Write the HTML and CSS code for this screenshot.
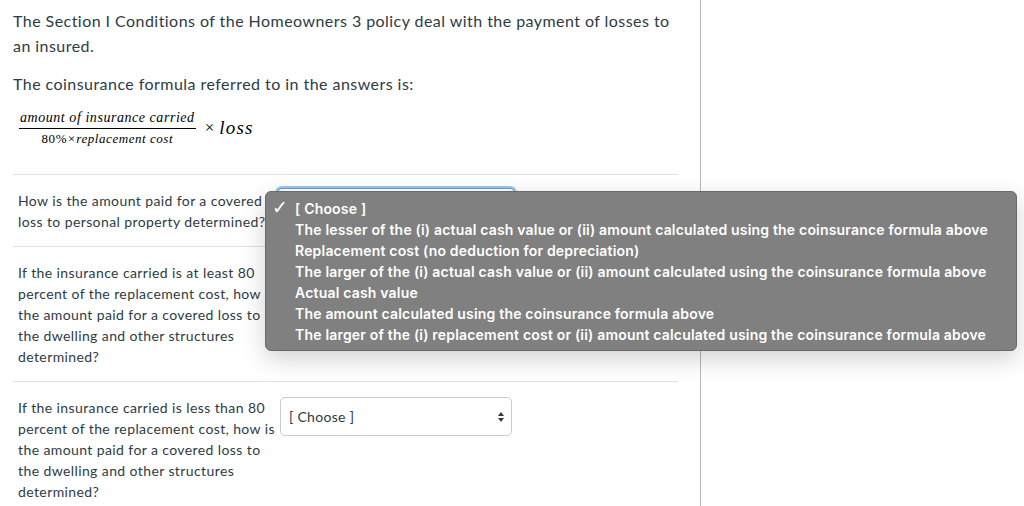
FILE: index.html
```html
<!DOCTYPE html>
<html lang="en">
<head>
  <meta charset="UTF-8" />
  <title>Quiz Question</title>
  <link rel="stylesheet" href="styles.css">
</head>
<body>
  <div class="page">
    <div class="main">
      <div class="content">
        <div class="intro">
          <p>The Section I Conditions of the Homeowners 3 policy deal with the payment of losses to an insured.</p>
          <p class="lead">The coinsurance formula referred to in the answers is:</p>
          <div class="formula">
            <span class="frac">
              <span class="num">amount of insurance carried</span>
              <span class="den"><span class="up">80%</span>×replacement cost</span>
            </span>
            <span class="times">×</span>
            <span class="loss">loss</span>
          </div>
        </div>

        <div class="question">
          <div class="q-text">How is the amount paid for a covered loss to personal property determined?</div>
          <div class="select focused">[ Choose ]<span class="arrows"></span></div>
        </div>

        <div class="question">
          <div class="q-text">If the insurance carried is at least 80 percent of the replacement cost, how is the amount paid for a covered loss to the dwelling and other structures determined?</div>
          <div class="select">[ Choose ]<span class="arrows"></span></div>
        </div>

        <div class="question">
          <div class="q-text">If the insurance carried is less than 80 percent of the replacement cost, how is the amount paid for a covered loss to the dwelling and other structures determined?</div>
          <div class="select">[ Choose ]<span class="arrows"></span></div>
        </div>
      </div>
    </div>
    <div class="side"></div>
  </div>

  <ul class="dropdown">
    <li class="checked">[ Choose ]</li>
    <li>The lesser of the (i) actual cash value or (ii) amount calculated using the coinsurance formula above</li>
    <li>Replacement cost (no deduction for depreciation)</li>
    <li>The larger of the (i) actual cash value or (ii) amount calculated using the coinsurance formula above</li>
    <li>Actual cash value</li>
    <li>The amount calculated using the coinsurance formula above</li>
    <li>The larger of the (i) replacement cost or (ii) amount calculated using the coinsurance formula above</li>
  </ul>
</body>
</html>
```

FILE: styles.css
```css
body {
  margin: 0;
  padding: 0;
  background: #fff;
  color: #2d3b45;
  font-family: Lato, "Liberation Sans", sans-serif;
  overflow: hidden;
}

.page {
  display: flex;
  height: 506px;
}

.main {
  width: 700px;
  border-right: 1px solid #b4b8bb;
}

.content {
  padding: 8px 22px 0 13px;
}

.intro p {
  margin: 0;
  font-size: 16px;
  line-height: 25px;
  letter-spacing: 0.45px;
}

.intro .lead {
  margin-top: 13px;
}

.formula {
  display: flex;
  align-items: center;
  padding: 11px 0 26px 6px;
  font-family: "Liberation Serif", serif;
  color: #000;
}

.frac {
  display: flex;
  flex-direction: column;
  align-items: center;
  margin-top: 2px;
}

.num {
  font-style: italic;
  font-size: 14px;
  letter-spacing: 0.55px;
  line-height: 17px;
  padding: 0 1px 2px;
  border-bottom: 1px solid #000;
}

.den {
  font-style: italic;
  font-size: 13px;
  letter-spacing: 0.55px;
  line-height: 19px;
}

.den .up {
  font-style: normal;
}

.times {
  font-size: 17px;
  margin: 0 5px 0 9px;
}

.loss {
  font-style: italic;
  font-size: 19px;
  letter-spacing: 1.2px;
}

.question {
  display: flex;
  align-items: flex-start;
  gap: 4px;
  border-top: 1px solid #dfe2e4;
  padding: 15px 0 14px 5px;
}

.q-text {
  width: 258px;
  font-size: 14px;
  line-height: 21px;
  letter-spacing: 0.4px;
}

.select {
  position: relative;
  box-sizing: border-box;
  width: 232px;
  height: 39px;
  border: 1px solid #c7cdd1;
  border-radius: 5px;
  padding: 0 8px;
  font-size: 14px;
  letter-spacing: 0.3px;
  line-height: 37px;
  color: #2d3b45;
  background: #fff;
}

.select.focused {
  margin: -2px 0 0 -3px;
  width: 238px;
  border-color: #5b9ce8;
  box-shadow: 0 0 0 2px #9ec3f0;
}

.arrows {
  position: absolute;
  right: 7px;
  top: 14px;
  width: 0;
  height: 0;
  border-left: 3px solid transparent;
  border-right: 3px solid transparent;
  border-bottom: 4px solid #2d3b45;
}

.arrows::after {
  content: "";
  position: absolute;
  left: -3px;
  top: 6px;
  border-left: 3px solid transparent;
  border-right: 3px solid transparent;
  border-top: 4px solid #2d3b45;
}

.dropdown {
  position: absolute;
  left: 265px;
  top: 191px;
  width: 752px;
  box-sizing: border-box;
  margin: 0;
  padding: 6px 0 5px 29px;
  list-style: none;
  background: #808080;
  border: 1px solid #6a6a6a;
  border-radius: 6px;
  box-shadow: 0 8px 24px rgba(0, 0, 0, 0.18);
  font-family: Inter, "Liberation Sans", Arial, sans-serif;
  font-size: 14px;
  font-weight: 600;
  letter-spacing: 0.19px;
  line-height: 21px;
  color: #fff;
}

.dropdown li {
  position: relative;
  white-space: nowrap;
}

.dropdown li.checked::before {
  content: "✓";
  position: absolute;
  left: -23px;
  top: -1px;
  font-family: "DejaVu Sans", sans-serif;
  font-size: 19px;
  font-weight: bold;
}
```
